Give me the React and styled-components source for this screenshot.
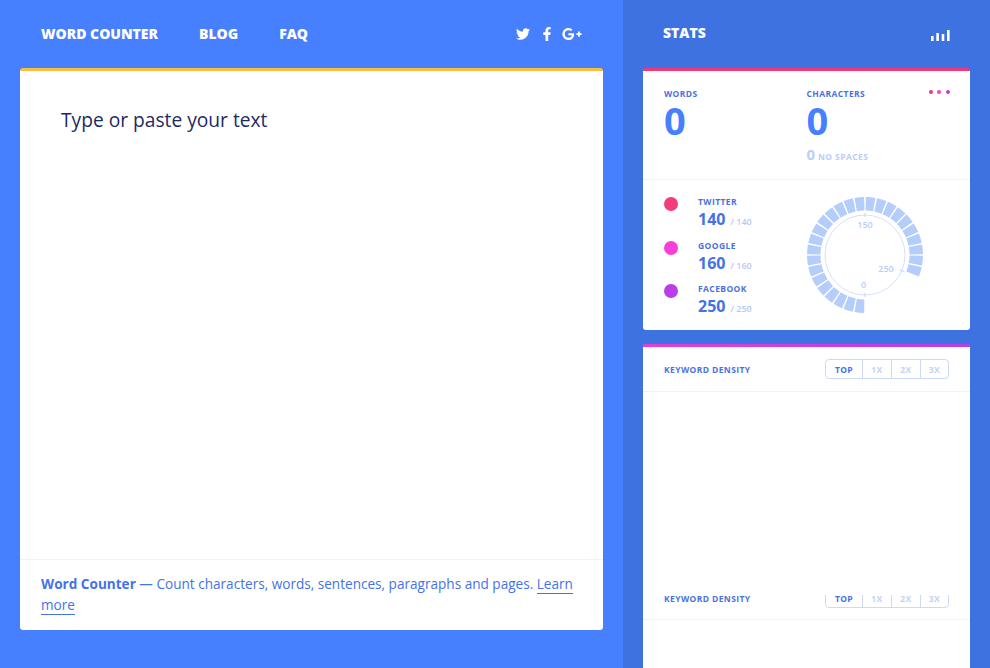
import React from 'react';
import styled, { createGlobalStyle } from 'styled-components';
import { FaTwitter, FaFacebookF, FaGooglePlusG } from 'react-icons/fa';

const Global = createGlobalStyle`
  html, body { margin: 0; padding: 0; height: 100%; overflow: hidden; }
  body { font-family: "Open Sans", "Noto Sans", sans-serif; background: #4680fe; }
`;
const Page = styled.div`display: flex; width: 990px; height: 668px; overflow: hidden;`;
const Left = styled.main`width: 623px; flex: none; background: #4680fe; padding: 0 20px 38px; box-sizing: border-box; display: flex; flex-direction: column;`;
const Right = styled.aside`flex: 1; background: #3e72e0; padding: 0 20px; box-sizing: border-box; display: flex; flex-direction: column; overflow: hidden;`;
const TopBar = styled.header`height: 68px; flex: none; display: flex; align-items: center; padding: 0 ${p => p.$pad}px; color: #fff; box-sizing: border-box;`;
const NavLink = styled.a`font-weight: 800; font-size: 14px; letter-spacing: 0; margin-right: 41px; color: #fff; line-height: 20px;`;
const Social = styled.div`margin-left: auto; display: flex; align-items: center; gap: 8px; color: #fff; height: 14px;`;
const TwitterIcon = styled(FaTwitter)`margin-right: 2px;`;
const Card = styled.section`background: #fff; border-top: 3px solid ${p => p.$accent}; border-radius: 3px; box-sizing: border-box;`;
const EditorCard = styled(Card)`flex: 1; display: flex; flex-direction: column;`;
const Editor = styled.div`flex: 1; padding: 35px 41px; font-size: 19.2px; line-height: 28px; color: #1c2a66;`;
const Foot = styled.footer`border-top: 1px solid #f0f2f6; padding: 13px 20px 14px 21px; font-size: 13.58px; line-height: 21px; color: #4472e8; height: 71px; box-sizing: border-box; flex: none;`;
const Strong = styled.strong`font-weight: 700;`;
const LearnLink = styled.a`color: #4472e8; border-bottom: 1px solid #4472e8;`;
const Title = styled.h2`margin: 0; font-weight: 800; font-size: 14px; letter-spacing: 0; color: #fff; line-height: 20px; position: relative; top: -1px;`;
const Bars = styled.svg`margin-left: auto; display: block; margin-top: 2px;`;
const StatsCard = styled(Card)`height: 262px; flex: none; display: flex; flex-direction: column;`;
const Counts = styled.div`height: 109px; box-sizing: border-box; border-bottom: 1px solid #f0f2f6; padding: 17px 21px 0; display: flex; position: relative; flex: none;`;
const CountCol = styled.div`width: 143px; display: flex; flex-direction: column;`;
const Label = styled.div`font-size: 8.5px; font-weight: 700; letter-spacing: 0.4px; color: #4a72e0; line-height: 12px;`;
const KLabel = styled(Label)`margin-top: 1px;`;
const Big = styled.div`font-size: 38px; font-weight: 700; color: #4680fe; line-height: 44px; margin-top: -2px;`;
const Sub = styled.div`margin-top: 3px; margin-left: 0; display: flex; align-items: baseline; gap: 2.5px; color: #bccdf7; font-weight: 700; font-size: 8.5px; letter-spacing: 0.4px; line-height: 18px;`;
const SubNum = styled.span`font-size: 15px; font-weight: 700;`;
const Dots = styled.div`position: absolute; top: 18.5px; right: 20.5px; display: flex; gap: 4.5px;`;
const Dot = styled.i`display: block; width: 4px; height: 4px; border-radius: 50%; background: ${p => p.$c};`;
const Lower = styled.div`flex: 1; display: flex; padding: 0 0 0 21px; position: relative;`;
const Limits = styled.ul`list-style: none; margin: 0; padding: 16px 0 0; width: 143px; display: flex; flex-direction: column; gap: 13.5px;`;
const Limit = styled.li`display: flex; height: 30px;`;
const Bullet = styled.span`width: 14px; height: 14px; border-radius: 50%; background: ${p => p.$c}; margin: 1px 20px 0 0; flex: none;`;
const LimitText = styled.div`display: flex; flex-direction: column;`;
const LimitNum = styled.div`font-size: 16px; font-weight: 700; color: #4472e8; line-height: 22px; white-space: nowrap;`;
const LimitMax = styled.span`font-size: 9px; font-weight: 600; color: #b5c9f6; margin-left: 5px;`;
const Gauge = styled.svg`display: block; margin: 15px 0 0 -2.5px; flex: none;`;
const GaugeText = styled.text`font-family: "Open Sans", sans-serif; font-size: 9px; font-weight: 600; fill: #b9cdf7;`;
const KeywordCard = styled(Card)`margin-top: 14px; flex: 1; display: flex; flex-direction: column; border-top: 3px solid transparent; border-image: linear-gradient(90deg, #e23fd6, #b93ee6) 1; border-radius: 0;`;
const KHead = styled.div`height: 45px; flex: none; box-sizing: border-box; border-bottom: 1px solid #f0f2f6; display: flex; align-items: center; padding: 0 21px; justify-content: space-between;`;
const KBody = styled.div`height: 203px; flex: none;`;
const KClip = styled.div`height: 25px; flex: none; overflow: hidden; border-bottom: 1px solid #f0f2f6; box-sizing: border-box; display: flex; align-items: flex-end; padding: 0 21px; justify-content: space-between;`;
const KInner = styled.div`display: flex; width: 100%; justify-content: space-between; align-items: center; height: 20px; margin-bottom: 11px; flex: none;`;
const Tabs = styled.div`display: flex; border: 1px solid #cddaf6; border-radius: 4px; height: 20px; box-sizing: border-box;`;
const Tab = styled.span`box-sizing: border-box; width: ${p => p.$w}px; display: flex; align-items: center; justify-content: center; font-size: 8.5px; font-weight: 700; letter-spacing: 0.4px; color: ${p => p.$on ? '#4472e8' : '#c3d2f5'}; border-left: ${p => p.$first ? 'none' : '1px solid #cddaf6'};`;

const TabSet = () => (
  <Tabs>
    <Tab $w={36} $first $on>TOP</Tab>
    <Tab $w={29}>1X</Tab>
    <Tab $w={29}>2X</Tab>
    <Tab $w={28}>3X</Tab>
  </Tabs>
);

function sector(cx, cy, r0, r1, a0, a1) {
  const p = (r, a) => {
    const t = (a - 90) * Math.PI / 180;
    return `${(cx + r * Math.cos(t)).toFixed(2)} ${(cy + r * Math.sin(t)).toFixed(2)}`;
  };
  return `M${p(r0, a0)} L${p(r1, a0)} A${r1} ${r1} 0 0 1 ${p(r1, a1)} L${p(r0, a1)} A${r0} ${r0} 0 0 0 ${p(r0, a0)}Z`;
}
const segs = Array.from({ length: 26 }, (_, i) => {
  const a = 180 + i * 11.25;
  return sector(60, 60, 44.5, 58, a + 0.8, a + 10.45);
});
const tick = (a, r0, r1) => {
  const t = (a - 90) * Math.PI / 180;
  return { x1: 60 + r0 * Math.cos(t), y1: 60 + r0 * Math.sin(t), x2: 60 + r1 * Math.cos(t), y2: 60 + r1 * Math.sin(t) };
};

const limits = [
  ['TWITTER', 140, '#f43d78'],
  ['GOOGLE', 160, '#f83fd9'],
  ['FACEBOOK', 250, '#b93ee9'],
];

export default function App() {
  return (
    <Page>
      <Global />
      <Left>
        <TopBar $pad={21}>
          <NavLink>WORD COUNTER</NavLink>
          <NavLink>BLOG</NavLink>
          <NavLink>FAQ</NavLink>
          <Social>
            <TwitterIcon size={14} />
            <FaFacebookF size={14} />
            <FaGooglePlusG size={20} />
          </Social>
        </TopBar>
        <EditorCard $accent="#fcbb42">
          <Editor>Type or paste your text</Editor>
          <Foot>
            <Strong>Word Counter</Strong> — Count characters, words, sentences, paragraphs and pages. <LearnLink>Learn more</LearnLink>
          </Foot>
        </EditorCard>
      </Left>
      <Right>
        <TopBar $pad={20}>
          <Title>STATS</Title>
          <Bars width="19" height="11" viewBox="0 0 19 11" fill="#fff">
            <rect x="0" y="6" width="2.6" height="5" />
            <rect x="5.3" y="3" width="2.6" height="8" />
            <rect x="10.7" y="4" width="2.6" height="7" />
            <rect x="16" y="0" width="2.6" height="11" />
          </Bars>
        </TopBar>
        <StatsCard $accent="#f0377a">
          <Counts>
            <CountCol>
              <Label>WORDS</Label>
              <Big>0</Big>
            </CountCol>
            <CountCol>
              <Label>CHARACTERS</Label>
              <Big>0</Big>
              <Sub><SubNum>0</SubNum> NO SPACES</Sub>
            </CountCol>
            <Dots>
              <Dot $c="#f0377a" />
              <Dot $c="#f83fd9" />
              <Dot $c="#b93ee9" />
            </Dots>
          </Counts>
          <Lower>
            <Limits>
              {limits.map(([n, v, c]) => (
                <Limit key={n}>
                  <Bullet $c={c} />
                  <LimitText>
                    <Label>{n}</Label>
                    <LimitNum>{v}<LimitMax>/ {v}</LimitMax></LimitNum>
                  </LimitText>
                </Limit>
              ))}
            </Limits>
            <Gauge width="120" height="120" viewBox="0 0 120 120">
              {segs.map((d, i) => <path key={i} d={d} fill="#b5cdfb" />)}
              <circle cx="60" cy="60" r="40" fill="none" stroke="#d5e1fa" strokeWidth="1" />
              <line {...tick(0, 38, 42)} stroke="#c5d5f7" />
              <line {...tick(113, 38, 43)} stroke="#c5d5f7" />
              <line {...tick(180, 38, 42)} stroke="#c5d5f7" />
              <GaugeText x="60" y="32.5" textAnchor="middle">150</GaugeText>
              <GaugeText x="81" y="76.5" textAnchor="middle">250</GaugeText>
              <GaugeText x="58.5" y="92.5" textAnchor="middle">0</GaugeText>
            </Gauge>
          </Lower>
        </StatsCard>
        <KeywordCard>
          <KHead>
            <KLabel>KEYWORD DENSITY</KLabel>
            <TabSet />
          </KHead>
          <KBody />
          <KClip>
            <KInner>
              <KLabel>KEYWORD DENSITY</KLabel>
              <TabSet />
            </KInner>
          </KClip>
        </KeywordCard>
      </Right>
    </Page>
  );
}
